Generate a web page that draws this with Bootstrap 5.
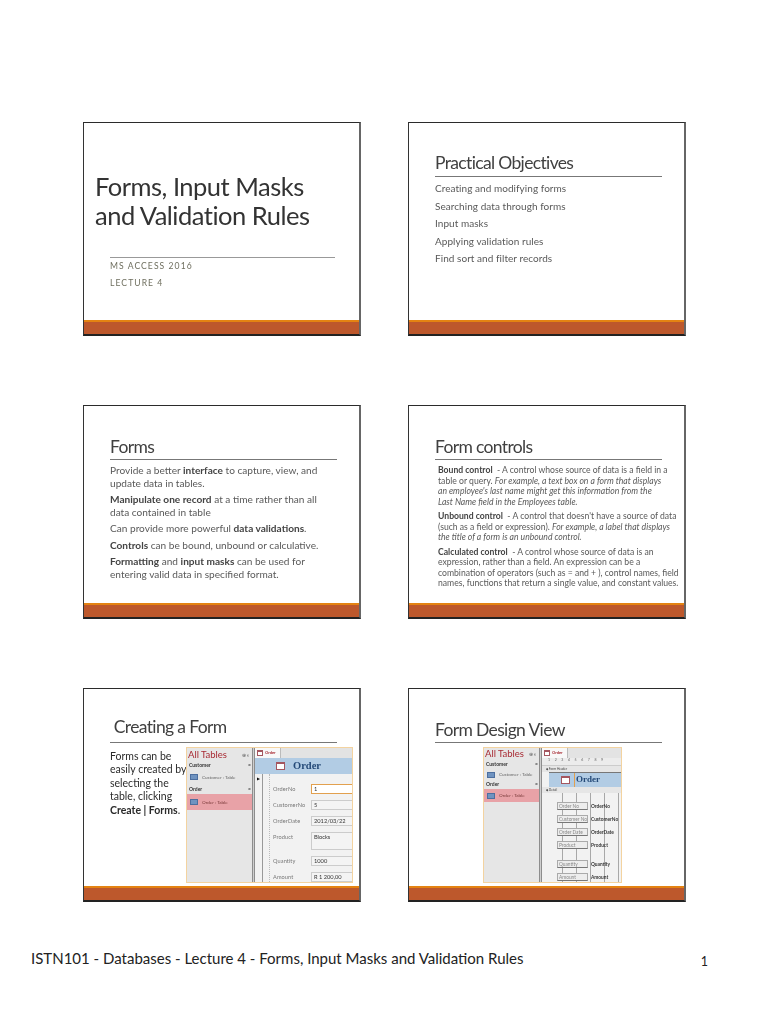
<!DOCTYPE html>
<html lang="en">
<head>
<meta charset="utf-8">
<title>ISTN101 Lecture 4</title>
<link href="https://cdn.jsdelivr.net/npm/bootstrap@5.3.0/dist/css/bootstrap.min.css" rel="stylesheet">
<style>
body{background:#fff;font-family:Lato,"Open Sans",sans-serif;color:#595959;width:768px;height:1024px;overflow:hidden}
.sheet{display:grid;grid-template-columns:278px 278px;column-gap:47px;row-gap:69px;padding:122px 0 0 83px}
.slide{height:214px;border:1px solid #2b2b2b;border-left-color:#333;border-right:2px solid #666;border-bottom:2px solid #222;display:flex;flex-direction:column;filter:blur(.3px);background:#fff}
.slide-main{flex:1 1 auto;min-height:0;padding:0 0 0 26px}
.slide-band{flex:0 0 14px;background:#bd582c;border-top:2px solid #e48312}
.main-title{font-size:25.5px;line-height:29px;color:#333;padding:49px 0 0 11px;margin:0 0 0 -26px;letter-spacing:-.5px;font-weight:400}
.cover-rule{height:1px;background:#999;margin:27px 24px 0 0}
.cover-sub{font-size:8.6px;letter-spacing:1.05px;color:#6f6f5f;line-height:17px}
.head{font-size:17.5px;line-height:22px;color:#404040;letter-spacing:-.65px;font-weight:400;margin:0;padding-top:29px}
.head-low{padding-top:30px}
.head-high{padding-top:27px}
.head-rule{height:1px;background:#777;margin:2px 22px 0 0}
.head-low + .head-rule{margin-top:1px}
.head-high + .head-rule{margin-top:4px}
.obj{list-style:none;margin:3px 0 0;padding:0;font-size:10px;line-height:17.6px;letter-spacing:.05px}
.para{font-size:10.1px;line-height:12.5px;margin:0 24px 4px 0;color:#595959}
.para b,.small-para b{color:#444}
.forms-body{padding-top:4px}
.small-para{font-size:8.65px;line-height:10.5px;margin:0 0 4px 3px;color:#595959;white-space:nowrap}
.small-body{padding-top:5px}
.creat-body{display:flex;padding-top:4px}
.creat-text{width:76px;font-size:10.5px;line-height:13.4px;color:#2b2b2b;padding-top:3px;flex:none;white-space:nowrap}
.shot{height:136px;border:1px solid #f3d3a0;display:flex;background:#e6e6e6;overflow:hidden;flex:none}
.shot-a{width:167px}
.shot-b{width:139px;margin:0 0 0 48px}
.design-body{padding-top:4px}
.side{flex:none;background:#e6e6e6;height:100%;font-size:5px;color:#333;line-height:7px}
.shot-a .side{width:65px}
.shot-b .side{width:55px}
.side-title{font-size:9.5px;line-height:12px;height:13px;color:#a82a33;padding:0 0 0 1px;display:flex;justify-content:space-between;align-items:center;white-space:nowrap}
.shot-b .side-title{height:12px}
.side-title span{font-size:5px;color:#555;padding-right:3px}
.side-group{font-weight:700;padding:1px 1px 1px 2px;display:flex;justify-content:space-between;font-size:5px}
.side-item + .side-group{padding-top:2px}
.shot-b .side-item + .side-group{padding-top:1px}
.side-item{display:flex;align-items:center;gap:4px;height:14px;padding-left:3px;font-size:4.6px;color:#666;white-space:nowrap}
.shot-a .side-item.on{height:16px}
.shot-b .side-item{height:11px}
.shot-b .side-item.on{height:13px}
.side-item.on{background:#e8a2a7;color:#7a3a3a}
.tbl-ico{width:8px;height:6px;background:#6f93c0;border:1px solid #4d6f9f;flex:none}
.divide{flex:none;width:3px;background:#cfcfcf;border-left:1px solid #8d8d8d;border-right:1px solid #8d8d8d}
.pane{flex:1 1 auto;min-width:0;background:#f2f2f2;color:#444}
.tabs{height:10px;background:#e3e3e3;display:flex;align-items:flex-end}
.doc-tab{display:flex;align-items:center;gap:2px;height:10px;width:26px;background:#f8f8f8;font-size:4px;font-weight:700;color:#a82a33;padding-left:2px;border-right:1px solid #bbb}
.doc-ico{width:6px;height:6px;background:#fff;border:1px solid #a4565f;border-top-width:2px;flex:none}
.banner{height:16px;background:#b2cce4;display:flex;align-items:center;gap:8px;padding-left:21px;font-family:"Liberation Serif",serif;font-weight:700;font-size:10.5px;color:#254a78}
.form-ico{width:9px;height:8px;background:#fff;border:1px solid #a4565f;border-top-width:2px;flex:none}
.form-grid{display:flex;height:110px}
.selector{flex:none;width:8px;border-right:1px solid #999;font-size:4px;padding:3px 0 0 2px;color:#111;line-height:4px}
.fields{flex:1 1 auto;min-width:0;padding:10px 0 0 3px;font-size:5.6px;color:#777;border-left:1px dotted #bbb;margin-left:6px}
.field-row{display:flex;align-items:flex-start;margin-bottom:6px}
.field-row label{flex:none;width:38px;line-height:10px;margin:0;letter-spacing:.1px}
.field-box{flex:1 1 auto;height:10px;line-height:8px;border:1px solid #ccc;border-right:0;background:#f4f4f4;color:#333;font-size:5.7px;padding-left:2px;white-space:nowrap}
.field-box.sel{border:1px solid #e2a04e;border-right:0;background:#fff}
.field-box.tall{height:18px}
.ruler{height:8px;background:#ececec;border-bottom:1px solid #ccc;font-size:3.5px;color:#666;letter-spacing:4.6px;padding-left:6px;line-height:4px;white-space:nowrap;overflow:hidden}
.sec-bar{height:6px;font-size:3.2px;line-height:6px;background:#e6e6e6;color:#444;padding-left:4px;white-space:nowrap}
.d-banner{height:15px;background:#b2cce4;margin-left:7px;display:flex;align-items:center;gap:4px;padding-left:12px;font-family:"Liberation Serif",serif;font-weight:700;font-size:9px;color:#254a78;border-top:1px solid #777}
.d-banner .d-title{border-left:1px solid #e2a04e;padding-left:1px}
.d-grid{margin-left:7px;height:92px;background-color:#f2f2f2;background-image:repeating-linear-gradient(90deg,transparent 0 13px,#a8a8a8 13px 14px);padding:9px 0 0 8px;font-size:4.8px}
.d-row{display:flex;gap:3px;height:13px;align-items:flex-start;white-space:nowrap}
.d-tall{height:19px}
.d-lab{flex:none;width:31px;border:1px solid #aaa;border-bottom-color:#777;background:#ededed;color:#888;line-height:6px;height:8px;padding-left:1px;overflow:hidden}
.d-val{color:#333;font-weight:700;line-height:8px}
.footline{display:flex;justify-content:space-between;padding:0 60px 0 31px;margin-top:47px;color:#222;font-size:15px;line-height:18px;font-family:Lato,sans-serif}
.page-no{font-size:12.5px;padding-top:4px}
</style>
</head>
<body>
<div class="sheet">

  <section class="slide">
    <div class="slide-main">
      <h1 class="main-title">Forms, Input Masks<br>and Validation Rules</h1>
      <div class="cover-rule"></div>
      <p class="cover-sub mb-0">MS ACCESS 2016</p>
      <p class="cover-sub mb-0">LECTURE 4</p>
    </div>
    <div class="slide-band"></div>
  </section>

  <section class="slide">
    <div class="slide-main">
      <h2 class="head">Practical Objectives</h2>
      <div class="head-rule"></div>
      <ul class="obj">
        <li>Creating and modifying forms</li>
        <li>Searching data through forms</li>
        <li>Input masks</li>
        <li>Applying validation rules</li>
        <li>Find sort and filter records</li>
      </ul>
    </div>
    <div class="slide-band"></div>
  </section>

  <section class="slide">
    <div class="slide-main">
      <h2 class="head head-low">Forms</h2>
      <div class="head-rule"></div>
      <div class="forms-body">
        <p class="para">Provide a better <b>interface</b> to capture, view, and update data in tables.</p>
        <p class="para"><b>Manipulate one record</b> at a time rather than all data contained in table</p>
        <p class="para">Can provide more powerful <b>data validations</b>.</p>
        <p class="para"><b>Controls</b> can be bound, unbound or calculative.</p>
        <p class="para"><b>Formatting</b> and <b>input masks</b> can be used for entering valid data in specified format.</p>
      </div>
    </div>
    <div class="slide-band"></div>
  </section>

  <section class="slide">
    <div class="slide-main">
      <h2 class="head head-low">Form controls</h2>
      <div class="head-rule"></div>
      <div class="small-body">
        <p class="small-para"><b>Bound control</b>&nbsp; - A control whose source of data is a field in a<br>table or query. <i>For example, a text box on a form that displays<br>an employee's last name might get this information from the<br>Last Name field in the Employees table.</i></p>
        <p class="small-para"><b>Unbound control</b>&nbsp; - A control that doesn't have a source of data<br>(such as a field or expression). <i>For example, a label that displays<br>the title of a form is an unbound control.</i></p>
        <p class="small-para"><b>Calculated control</b>&nbsp; - A control whose source of data is an<br>expression, rather than a field. An expression can be a<br>combination of operators (such as = and + ), control names, field<br>names, functions that return a single value, and constant values.</p>
      </div>
    </div>
    <div class="slide-band"></div>
  </section>

  <section class="slide">
    <div class="slide-main">
      <h2 class="head head-high">&nbsp;Creating a Form</h2>
      <div class="head-rule"></div>
      <div class="creat-body">
        <p class="creat-text mb-0">Forms can be<br>easily created by<br>selecting the<br>table, clicking<br><b>Create | Forms</b>.</p>
        <div class="shot shot-a">
          <div class="side">
            <div class="side-title">All Tables <span>⊛ «</span></div>
            <div class="side-group"><span>Customer</span><span>≈</span></div>
            <div class="side-item"><span class="tbl-ico"></span>Customer : Table</div>
            <div class="side-group"><span>Order</span><span>≈</span></div>
            <div class="side-item on"><span class="tbl-ico"></span>Order : Table</div>
          </div>
          <div class="divide"></div>
          <div class="pane">
            <div class="tabs"><div class="doc-tab"><span class="doc-ico"></span>Order</div></div>
            <div class="banner"><span class="form-ico"></span>Order</div>
            <div class="form-grid">
              <div class="selector">▶</div>
              <div class="fields">
                <div class="field-row"><label>OrderNo</label><div class="field-box sel">1</div></div>
                <div class="field-row"><label>CustomerNo</label><div class="field-box">5</div></div>
                <div class="field-row"><label>OrderDate</label><div class="field-box">2012/03/22</div></div>
                <div class="field-row"><label>Product</label><div class="field-box tall">Blocks</div></div>
                <div class="field-row"><label>Quantity</label><div class="field-box">1000</div></div>
                <div class="field-row"><label>Amount</label><div class="field-box">R 1 200,00</div></div>
              </div>
            </div>
          </div>
        </div>
      </div>
    </div>
    <div class="slide-band"></div>
  </section>

  <section class="slide">
    <div class="slide-main">
      <h2 class="head head-low">Form Design View</h2>
      <div class="head-rule"></div>
      <div class="design-body">
        <div class="shot shot-b">
          <div class="side">
            <div class="side-title">All Tables <span>⊛ «</span></div>
            <div class="side-group"><span>Customer</span><span>≈</span></div>
            <div class="side-item"><span class="tbl-ico"></span>Customer : Table</div>
            <div class="side-group"><span>Order</span><span>≈</span></div>
            <div class="side-item on"><span class="tbl-ico"></span>Order : Table</div>
          </div>
          <div class="divide"></div>
          <div class="pane">
            <div class="tabs"><div class="doc-tab"><span class="doc-ico"></span>Order</div></div>
            <div class="ruler">123456789</div>
            <div class="sec-bar">◆ Form Header</div>
            <div class="d-banner"><span class="form-ico"></span><span class="d-title">Order</span></div>
            <div class="sec-bar">◆ Detail</div>
            <div class="d-grid">
              <div class="d-row"><span class="d-lab">Order No</span><span class="d-val">OrderNo</span></div>
              <div class="d-row"><span class="d-lab">Customer No</span><span class="d-val">CustomerNo</span></div>
              <div class="d-row"><span class="d-lab">Order Date</span><span class="d-val">OrderDate</span></div>
              <div class="d-row d-tall"><span class="d-lab">Product</span><span class="d-val">Product</span></div>
              <div class="d-row"><span class="d-lab">Quantity</span><span class="d-val">Quantity</span></div>
              <div class="d-row"><span class="d-lab">Amount</span><span class="d-val">Amount</span></div>
            </div>
          </div>
        </div>
      </div>
    </div>
    <div class="slide-band"></div>
  </section>

</div>
<div class="footline">
  <span>ISTN101 - Databases - Lecture 4 - Forms, Input Masks and Validation Rules</span>
  <span class="page-no">1</span>
</div>
<script src="https://cdn.jsdelivr.net/npm/bootstrap@5.3.0/dist/js/bootstrap.bundle.min.js"></script>
</body>
</html>
